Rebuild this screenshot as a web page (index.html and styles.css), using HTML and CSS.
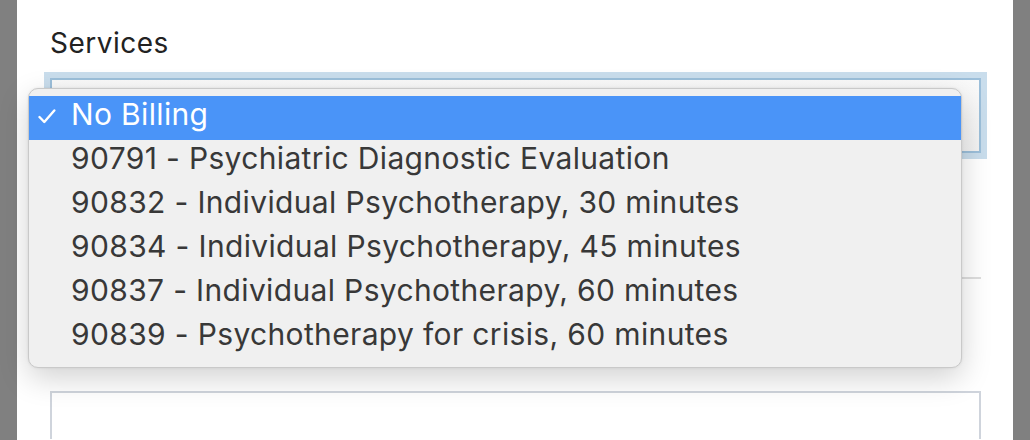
FILE: index.html
```html
<!DOCTYPE html>
<html>
<head>
<meta charset="utf-8">
<link rel="stylesheet" href="styles.css">
</head>
<body>
<div class="frame">
  <div class="panel">
    <div class="label">Services</div>
    <div class="select"></div>
    <div class="gap"></div>
    <div class="sep"></div>
    <div class="notes"></div>
  </div>
  <div class="menu">
    <div class="opt sel"><span class="check"><svg width="18" height="15" viewBox="0 0 18 15"><path d="M1.5 8 L6.3 13 L16.3 1.5" fill="none" stroke="#fff" stroke-width="2.4" stroke-linecap="round" stroke-linejoin="round"/></svg></span>No Billing</div>
    <div class="opt">90791 - Psychiatric Diagnostic Evaluation</div>
    <div class="opt">90832 - Individual Psychotherapy, 30 minutes</div>
    <div class="opt">90834 - Individual Psychotherapy, 45 minutes</div>
    <div class="opt">90837 - Individual Psychotherapy, 60 minutes</div>
    <div class="opt">90839 - Psychotherapy for crisis, 60 minutes</div>
  </div>
</div>
</body>
</html>
```
FILE: styles.css
```css
html, body {
  margin: 0;
  padding: 0;
  height: 440px;
  overflow: hidden;
  background: #808080;
  font-family: Inter, "Liberation Sans", sans-serif;
}
.frame {
  position: relative;
  height: 440px;
  width: 1030px;
}
.panel {
  margin-left: 17px;
  width: 996px;
  height: 440px;
  background: #fff;
  box-sizing: border-box;
  padding: 25px 32px 0 33px;
  overflow: hidden;
}
.label {
  font-size: 28px;
  line-height: 36px;
  color: #222;
  letter-spacing: 0.5px;
}
.select {
  margin-top: 17px;
  height: 75px;
  box-sizing: border-box;
  border: 2px solid #9cbfda;
  box-shadow: 0 0 0 6px #c9ddec;
  background: linear-gradient(#fafafa, #f2f2f2);
}
.gap {
  height: 124px;
}
.sep {
  height: 2px;
  background: #dedede;
}
.notes {
  margin-top: 112px;
  height: 46px;
  border: 2px solid #cfd4dc;
  border-bottom: none;
  background: #fff;
}
.menu {
  position: absolute;
  left: 28px;
  top: 88px;
  width: 934px;
  height: 280px;
  box-sizing: border-box;
  padding-top: 7px;
  background: #f0f0f0;
  border: 1px solid #c9c9c9;
  border-radius: 10px;
  box-shadow: 0 10px 30px rgba(0,0,0,0.18), 0 0 3px rgba(0,0,0,0.08);
}
.opt {
  position: relative;
  height: 44px;
  line-height: 37px;
  padding-left: 42px;
  font-size: 30px;
  letter-spacing: 0.35px;
  color: #383838;
  white-space: nowrap;
}
.opt.sel {
  background: #4a94f8;
  color: #fff;
}
.check {
  position: absolute;
  left: 9px;
  top: 13px;
  width: 18px;
  height: 15px;
  line-height: 0;
}
```
